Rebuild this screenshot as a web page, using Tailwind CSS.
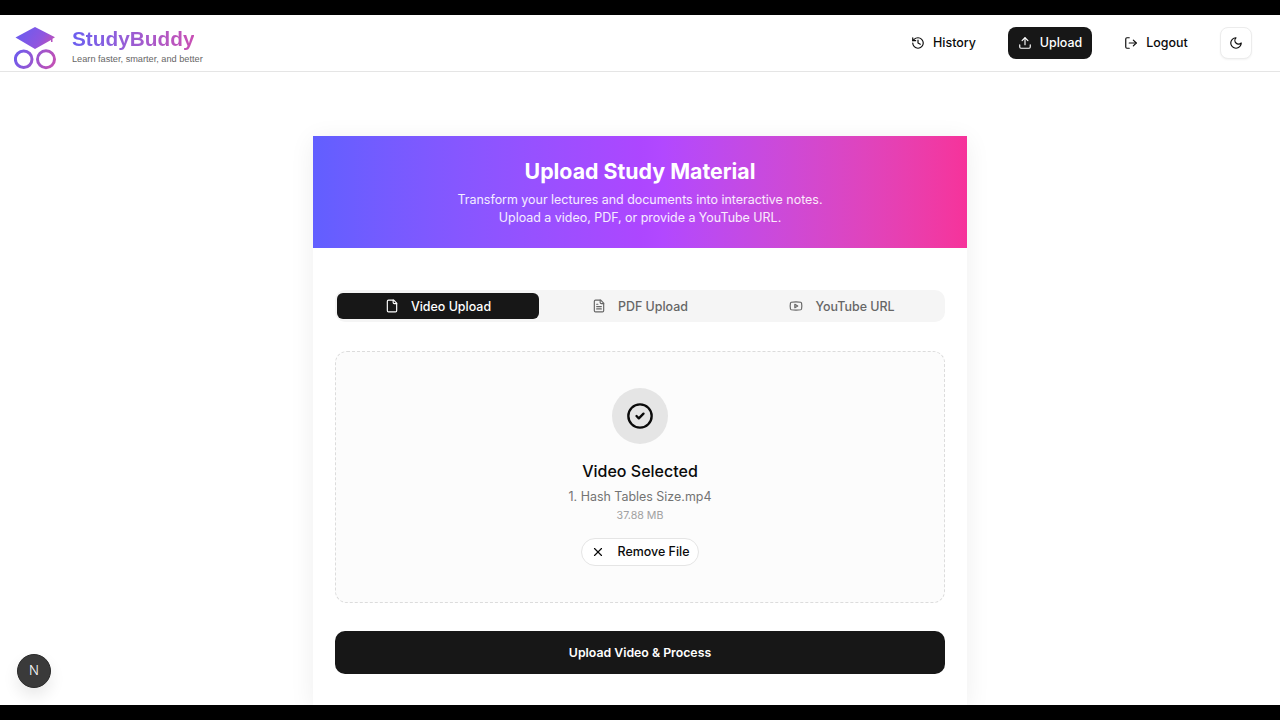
<!DOCTYPE html>
<html lang="en">
<head>
<meta charset="utf-8">
<title>StudyBuddy</title>
<script src="https://cdn.jsdelivr.net/npm/@tailwindcss/browser@4"></script>
</head>
<body class="font-['Inter',sans-serif] bg-white text-[#0a0a0a]">
<div class="relative w-[1280px] h-[720px] overflow-hidden flex flex-col bg-white">
  <div class="h-[15px] shrink-0 bg-black"></div>

  <header class="h-[57px] shrink-0 border-b border-[#e5e5e5] flex items-center justify-between pl-[14px] pr-[28px]">
    <div class="flex items-center gap-[14px]">
      <svg class="w-[44px] h-[56px] shrink-0" viewBox="14 15 44 56" fill="none">
        <defs>
          <linearGradient id="g1" gradientUnits="userSpaceOnUse" x1="20" y1="28" x2="52" y2="50"><stop offset="0" stop-color="#6a5cf0"/><stop offset="0.6" stop-color="#8f55df"/><stop offset="1" stop-color="#c94fb0"/></linearGradient>
          <linearGradient id="g2" gradientUnits="userSpaceOnUse" x1="14" y1="50" x2="56" y2="69"><stop offset="0" stop-color="#6a5cf0"/><stop offset="1" stop-color="#c94fb0"/></linearGradient>
        </defs>
        <path d="M35 27 L55 37.3 L52.5 38.7 L52.5 42 L51 42 L51 40 L35 49 L15.5 37.5 Z" fill="url(#g1)"/>
        <circle cx="23.7" cy="59.3" r="8.3" stroke="url(#g2)" stroke-width="3"/>
        <circle cx="46" cy="59.3" r="8.5" stroke="url(#g2)" stroke-width="3"/>
      </svg>
      <div class="flex flex-col pt-[6px]">
        <span class="font-['Liberation_Sans',sans-serif] font-bold text-[20.8px] leading-[26px] w-fit bg-linear-to-r from-[#6a5ef0] to-[#c84fb4] bg-clip-text text-transparent">StudyBuddy</span>
        <span class="font-['Liberation_Sans',sans-serif] text-[9.2px] leading-[13px] mt-[1px] text-[#666666]">Learn faster, smarter, and better</span>
      </div>
    </div>
    <nav class="flex items-center gap-[23px] text-[12.44px] font-medium">
      <a class="h-[31px] w-[83px] rounded-lg flex items-center justify-center gap-[8px]">
        <svg class="w-[14px] h-[14px]" viewBox="0 0 24 24" fill="none" stroke="currentColor" stroke-width="2" stroke-linecap="round" stroke-linejoin="round"><path d="M3 12a9 9 0 1 0 9-9 9.75 9.75 0 0 0-6.74 2.74L3 8"/><path d="M3 3v5h5"/><path d="M12 7v5l4 2"/></svg>
        <span class="mt-[1px]">History</span>
      </a>
      <a class="h-[32px] w-[84px] rounded-lg bg-[#171717] text-white flex items-center justify-center gap-[8px]">
        <svg class="w-[14px] h-[14px]" viewBox="0 0 24 24" fill="none" stroke="currentColor" stroke-width="2" stroke-linecap="round" stroke-linejoin="round"><path d="M21 15v4a2 2 0 0 1-2 2H5a2 2 0 0 1-2-2v-4"/><polyline points="17 8 12 3 7 8"/><line x1="12" y1="3" x2="12" y2="15"/></svg>
        <span class="mt-[1px]">Upload</span>
      </a>
      <a class="h-[31px] w-[82px] rounded-lg flex items-center justify-center gap-[8px]">
        <svg class="w-[14px] h-[14px]" viewBox="0 0 24 24" fill="none" stroke="currentColor" stroke-width="2" stroke-linecap="round" stroke-linejoin="round"><path d="M9 21H5a2 2 0 0 1-2-2V5a2 2 0 0 1 2-2h4"/><polyline points="16 17 21 12 16 7"/><line x1="21" y1="12" x2="9" y2="12"/></svg>
        <span class="mt-[1px]">Logout</span>
      </a>
      <button class="w-[32px] h-[32px] rounded-lg border border-[#ececec] shadow-xs bg-white flex items-center justify-center">
        <svg class="w-[14px] h-[14px]" viewBox="0 0 24 24" fill="none" stroke="currentColor" stroke-width="2" stroke-linecap="round" stroke-linejoin="round"><path d="M12 3a6 6 0 0 0 9 9 9 9 0 1 1-9-9Z"/></svg>
      </button>
    </nav>
  </header>

  <main class="flex-1 min-h-0 overflow-hidden flex justify-center pt-[64px]">
    <section class="w-[654px] h-fit bg-white shadow-[0_4px_24px_rgba(0,0,0,0.07)]">
      <div class="h-[111.5px] bg-linear-to-r from-indigo-500 via-purple-500 to-pink-500 flex flex-col items-center text-white">
        <h1 class="mt-[20px] text-[21.33px] leading-[30px] font-bold">Upload Study Material</h1>
        <p class="mt-[5px] text-[12.44px] leading-[18px] text-white/90">Transform your lectures and documents into interactive notes.</p>
        <p class="text-[12.44px] leading-[18px] text-white/90">Upload a video, PDF, or provide a YouTube URL.</p>
      </div>

      <div class="px-[22px] pt-[42.5px] pb-[32px]">
        <div class="h-[32px] rounded-[10px] bg-[#f5f5f5] p-[2px] py-[3px] grid grid-cols-3 text-[12.44px] font-medium text-[#666666]">
          <div class="rounded-md bg-[#171717] text-white flex items-center justify-center gap-[12px]">
            <svg class="w-[14px] h-[14px]" viewBox="0 0 24 24" fill="none" stroke="currentColor" stroke-width="2" stroke-linecap="round" stroke-linejoin="round"><path d="M15 2H6a2 2 0 0 0-2 2v16a2 2 0 0 0 2 2h12a2 2 0 0 0 2-2V7Z"/><path d="M14 2v4a2 2 0 0 0 2 2h4"/></svg>
            <span class="mt-[2px]">Video Upload</span>
          </div>
          <div class="flex items-center justify-center gap-[12px]">
            <svg class="w-[14px] h-[14px]" viewBox="0 0 24 24" fill="none" stroke="currentColor" stroke-width="2" stroke-linecap="round" stroke-linejoin="round"><path d="M15 2H6a2 2 0 0 0-2 2v16a2 2 0 0 0 2 2h12a2 2 0 0 0 2-2V7Z"/><path d="M14 2v4a2 2 0 0 0 2 2h4"/><path d="M10 9H8"/><path d="M16 13H8"/><path d="M16 17H8"/></svg>
            <span class="mt-[2px]">PDF Upload</span>
          </div>
          <div class="flex items-center justify-center gap-[12px]">
            <svg class="w-[14px] h-[14px]" viewBox="0 0 24 24" fill="none" stroke="currentColor" stroke-width="2" stroke-linecap="round" stroke-linejoin="round"><path d="M2.5 17a24.12 24.12 0 0 1 0-10 2 2 0 0 1 1.4-1.4 49.56 49.56 0 0 1 16.2 0A2 2 0 0 1 21.5 7a24.12 24.12 0 0 1 0 10 2 2 0 0 1-1.4 1.4 49.55 49.55 0 0 1-16.2 0A2 2 0 0 1 2.5 17"/><path d="m10 15 5-3-5-3z"/></svg>
            <span class="mt-[2px]">YouTube URL</span>
          </div>
        </div>

        <div class="mt-[29px] h-[252px] rounded-xl border-[1.5px] border-dashed border-[#dcdcdc] bg-[#fcfcfc] flex flex-col items-center pt-[36px]">
          <div class="w-[56.5px] h-[56px] rounded-full bg-[#e5e5e5] flex items-center justify-center">
            <svg class="w-[28px] h-[28px] text-[#0a0a0a]" viewBox="0 0 24 24" fill="none" stroke="currentColor" stroke-width="2" stroke-linecap="round" stroke-linejoin="round"><circle cx="12" cy="12" r="10"/><path d="m9 12 2 2 4-4"/></svg>
          </div>
          <h2 class="mt-[15px] text-base leading-[24px] font-medium">Video Selected</h2>
          <p class="mt-[4px] text-[12.44px] leading-[20px] text-[#737373]">1. Hash Tables Size.mp4</p>
          <p class="mt-[1px] text-[10.67px] leading-[16px] text-[#a1a1a1]">37.88 MB</p>
          <button class="mt-[14px] w-[118px] h-[28px] rounded-full border border-[#e5e5e5] bg-white flex items-center justify-center gap-[13px] text-[12.44px] font-medium">
            <svg class="w-[14px] h-[14px]" viewBox="0 0 24 24" fill="none" stroke="currentColor" stroke-width="2" stroke-linecap="round" stroke-linejoin="round"><path d="M18 6 6 18"/><path d="m6 6 12 12"/></svg>
            Remove File
          </button>
        </div>

        <button class="mt-[28px] w-full h-[43px] rounded-[10px] bg-[#171717] text-white text-[12.3px] font-semibold pt-[1px]">Upload Video &amp; Process</button>
      </div>
    </section>
  </main>

  <div class="h-[15px] shrink-0 bg-black"></div>

  <div class="absolute left-[17px] top-[654px] w-[34px] h-[34px] rounded-full bg-[#3a3a3a] border border-[#2a2a2a] shadow-[0_8px_16px_rgba(0,0,0,0.09)] flex items-center justify-center text-white text-[13px] font-light">N</div>
</div>
</body>
</html>
